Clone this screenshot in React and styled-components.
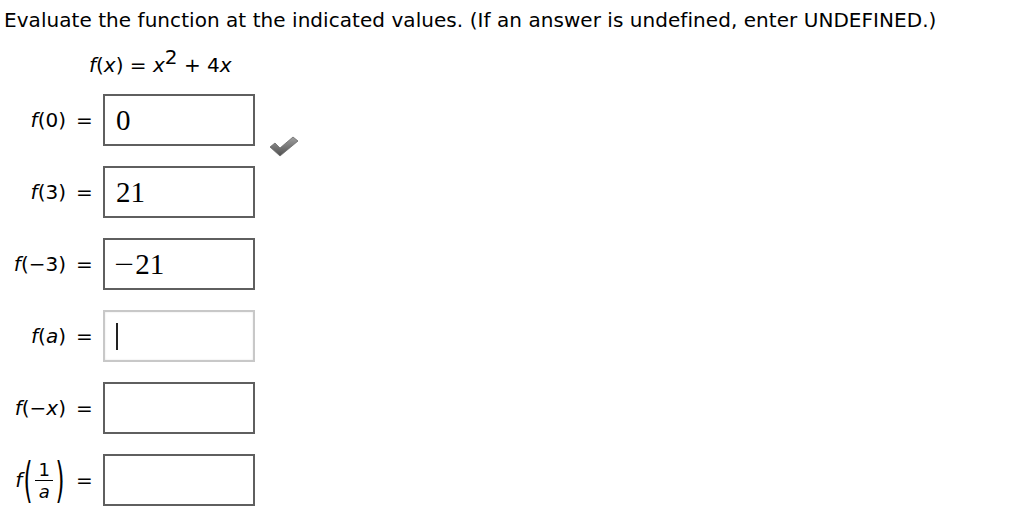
import styled, { createGlobalStyle } from 'styled-components';

const GlobalStyle = createGlobalStyle`
    html, body {
        margin: 0;
        padding: 0;
        background: #FFFFFF;
    }
    body {
        font-family: 'DejaVu Sans', Verdana, sans-serif;
        color: #000000;
    }
`;

const rows = [
    { arg: '0', value: '0', checked: true },
    { arg: '3', value: '21' },
    { arg: '−3', value: '21', negative: true },
    { arg: 'a', italic: true, focused: true },
    { arg: '−x', italic: true },
    { fraction: true },
];

function Label({ row }) {
    if (row.fraction) {
        return (
            <Expr>
                <I>f</I>
                <BigParen>(</BigParen>
                <Fraction>
                    <span>1</span>
                    <Bar />
                    <I>a</I>
                </Fraction>
                <BigParen>)</BigParen>
            </Expr>
        );
    }
    const arg = row.arg.startsWith('−') && row.italic
        ? <>−<I>{row.arg.slice(1)}</I></>
        : row.italic ? <I>{row.arg}</I> : row.arg;
    return (
        <Expr>
            <I>f</I>({arg})
        </Expr>
    );
}

function Check() {
    return (
        <CheckIcon width="32" height="22" viewBox="0 0 32 22">
            <defs>
                <linearGradient id="chk" x1="0" y1="0" x2="0" y2="1">
                    <stop offset="0" stopColor="#a0a0a0" />
                    <stop offset="1" stopColor="#505050" />
                </linearGradient>
            </defs>
            <path d="M2 11 L7 7 L12 12 L25 1 L30 5 L12 20 Z" fill="url(#chk)" stroke="#6a6a6a" strokeWidth="0.8" strokeLinejoin="round" />
        </CheckIcon>
    );
}

export default function App() {
    return (
        <Page>
            <GlobalStyle />
            <Prompt>Evaluate the function at the indicated values. (If an answer is undefined, enter UNDEFINED.)</Prompt>
            <Formula>
                <I>f</I>(<I>x</I>) = <I>x</I><Sup>2</Sup> + 4<I>x</I>
            </Formula>
            <Grid>
                {rows.map((row, i) => (
                    <Row key={i}>
                        <Label row={row} />
                        <Equals>=</Equals>
                        <AnswerBox focused={row.focused}>
                            {row.negative && <Minus>−</Minus>}
                            {row.value}
                            {row.focused && <Caret />}
                        </AnswerBox>
                        <Status>{row.checked && <Check />}</Status>
                    </Row>
                ))}
            </Grid>
        </Page>
    );
}

const Page = styled.div`
    padding: 9px 0 0 4px;
`;

const Prompt = styled.div`
    font-size: 20px;
    line-height: 23px;
    letter-spacing: 0.05px;
`;

const Formula = styled.div`
    font-size: 20px;
    line-height: 23px;
    padding: 22px 0 0 85px;
    white-space: pre;
`;

const I = styled.i`
    font-style: italic;
`;

const Sup = styled.sup`
    font-size: 20px;
    line-height: 0;
    vertical-align: 0.42em;
`;

const Grid = styled.div`
    display: flex;
    flex-direction: column;
    gap: 20px;
    padding-top: 17px;
`;

const Row = styled.div`
    display: grid;
    grid-template-columns: 62px 37px 152px 40px;
    align-items: center;
    height: 52px;
`;

const Expr = styled.div`
    display: flex;
    align-items: center;
    justify-content: flex-end;
    font-size: 20px;
    white-space: pre;
`;

const BigParen = styled.span`
    display: inline-block;
    font-size: 20px;
    transform: scale(1.15, 2.4);
    margin: 0 2px;
`;

const Fraction = styled.span`
    display: inline-flex;
    flex-direction: column;
    align-items: center;
    font-size: 18px;
    line-height: 17px;
    padding: 0 1px;
`;

const Bar = styled.span`
    width: 18px;
    height: 1px;
    background: #000000;
    margin: 2px 0;
`;

const Equals = styled.div`
    font-size: 20px;
    text-align: center;
`;

const AnswerBox = styled.div`
    box-sizing: border-box;
    height: 52px;
    border: 2px solid ${p => (p.focused ? '#c8c8c8' : '#5f5f5f')};
    box-shadow: ${p => (p.focused ? 'inset 0 0 2px rgba(0, 0, 0, 0.12)' : 'none')};
    display: flex;
    align-items: center;
    padding-left: 11px;
    font-family: 'Liberation Serif', 'Times New Roman', serif;
    font-size: 29px;
`;

const Minus = styled.span`
    margin-right: 3px;
    transform: scaleX(1.2);
    display: inline-block;
`;

const Caret = styled.span`
    width: 2px;
    height: 27px;
    background: #222222;
`;

const Status = styled.div`
    align-self: end;
    margin-bottom: -12px;
    padding-left: 13px;
`;

const CheckIcon = styled.svg`
    display: block;
`;
